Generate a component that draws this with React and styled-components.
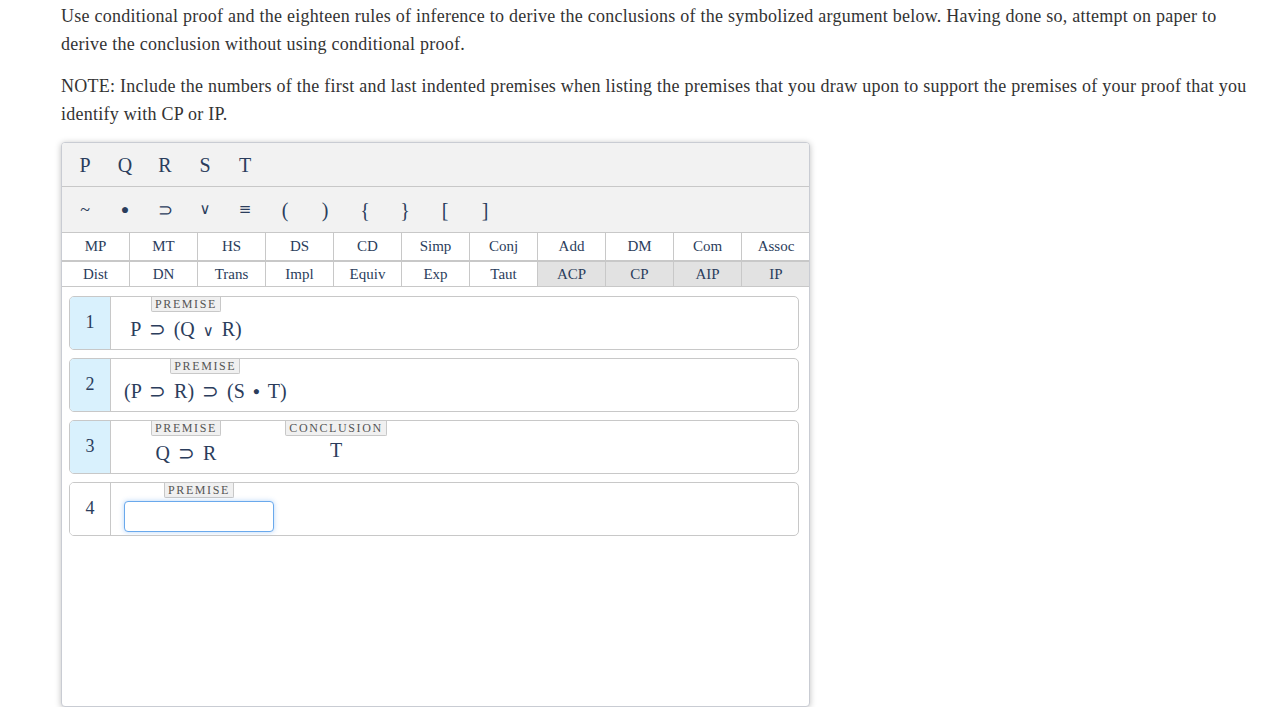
import React from "react";
import styled, { createGlobalStyle } from "styled-components";

const letters = ["P", "Q", "R", "S", "T"];
const symbols = [
  { s: "~", size: 18 },
  { s: "●", size: 14 },
  { s: "⊃", size: 18 },
  { s: "∨", size: 15, sans: true },
  { s: "≡", size: 15, sans: true },
  { s: "(", size: 20 },
  { s: ")", size: 20 },
  { s: "{", size: 20 },
  { s: "}", size: 20 },
  { s: "[", size: 20 },
  { s: "]", size: 20 },
];
const rules = [
  ["MP", "MT", "HS", "DS", "CD", "Simp", "Conj", "Add", "DM", "Com", "Assoc"],
  ["Dist", "DN", "Trans", "Impl", "Equiv", "Exp", "Taut", "ACP", "CP", "AIP", "IP"],
];
const shaded = ["ACP", "CP", "AIP", "IP"];

const lines = [
  { n: 1, formula: "P ⊃ (Q ∨ R)", given: true },
  { n: 2, formula: "(P ⊃ R) ⊃ (S • T)", given: true },
  { n: 3, formula: "Q ⊃ R", given: true, conclusion: "T" },
  { n: 4, input: true },
];

// split a formula so the wedge and dot get their own glyph size
const renderFormula = (text) =>
  text.split(/(∨|•)/).map((part, i) =>
    part === "∨" ? (
      <Wedge key={i}>∨</Wedge>
    ) : part === "•" ? (
      <Dot key={i}>●</Dot>
    ) : (
      part
    )
  );

const App = () => {
  return (
    <Page>
      <Global />
      <Para>
        Use conditional proof and the eighteen rules of inference to derive the conclusions of the
        symbolized argument below. Having done so, attempt on paper to derive the conclusion without
        using conditional proof.
      </Para>
      <Para>
        NOTE: Include the numbers of the first and last indented premises when listing the premises
        that you draw upon to support the premises of your proof that you identify with CP or IP.
      </Para>
      <Panel>
        <KeyRow>
          {letters.map((l) => (
            <Key key={l} size={20}>
              {l}
            </Key>
          ))}
        </KeyRow>
        <KeyRow symbols>
          {symbols.map((k) => (
            <Key key={k.s} size={k.size} sans={k.sans}>
              {k.s}
            </Key>
          ))}
        </KeyRow>
        <RuleGrid>
          {rules.map((row, i) =>
            row.map((r) => (
              <Rule key={r} shade={shaded.includes(r)} second={i === 1}>
                {r}
              </Rule>
            ))
          )}
        </RuleGrid>
        <Lines>
          {lines.map((line) => (
            <Line key={line.n}>
              <Num given={line.given}>{line.n}</Num>
              <Body>
                <Col>
                  <Tag>PREMISE</Tag>
                  {line.input ? <Field /> : <Formula>{renderFormula(line.formula)}</Formula>}
                </Col>
                {line.conclusion && (
                  <Col>
                    <Tag>CONCLUSION</Tag>
                    <Formula short>{line.conclusion}</Formula>
                  </Col>
                )}
              </Body>
            </Line>
          ))}
        </Lines>
      </Panel>
    </Page>
  );
};

export default App;

const Global = createGlobalStyle`
  body {
    margin: 0;
    background: #fff;
  }
  * { box-sizing: border-box; }
`;

const Page = styled.div`
  padding: 2px 0 0 61px;
  font-family: "Liberation Serif", "Times New Roman", serif;
  color: #333;
`;

const Para = styled.p`
  margin: 0 0 14px;
  font-size: 18px;
  line-height: 28px;
  letter-spacing: 0.25px;
`;

const Panel = styled.div`
  width: 749px;
  height: 565px;
  margin-top: 14px;
  border: 1px solid #c9ccd3;
  border-radius: 4px;
  box-shadow: 0 1px 6px rgba(0, 0, 0, 0.25);
  background: #fff;
  overflow: hidden;
  color: #2b3d5c;
`;

const KeyRow = styled.div`
  display: flex;
  align-items: center;
  height: ${(p) => (p.symbols ? "46px" : "44px")};
  padding-left: 3px;
  background: #f2f2f2;
  border-bottom: 1px solid #c8c8c8;
`;

const Key = styled.span`
  width: 40px;
  text-align: center;
  font-size: ${(p) => p.size}px;
  font-family: ${(p) => (p.sans ? '"DejaVu Sans", sans-serif' : '"Liberation Serif", serif')};
  line-height: 1;
`;

const RuleGrid = styled.div`
  display: grid;
  grid-template-columns: repeat(11, 68px);
  border-bottom: 1px solid #c8c8c8;
`;

const Rule = styled.div`
  height: ${(p) => (p.second ? "26px" : "27px")};
  display: flex;
  align-items: center;
  justify-content: center;
  font-size: 15px;
  background: ${(p) => (p.shade ? "#e2e2e2" : "#fff")};
  border-right: 1px solid #c8c8c8;
  border-top: ${(p) => (p.second ? "2px solid #c8c8c8" : "none")};
  &:nth-child(11n) {
    border-right: none;
  }
`;

const Lines = styled.div`
  display: flex;
  flex-direction: column;
  gap: 8px;
  padding: 9px 10px 0 7px;
`;

const Line = styled.div`
  display: flex;
  height: 54px;
  border: 1px solid #c8c8c8;
  border-radius: 5px;
  overflow: hidden;
`;

const Num = styled.div`
  width: 41px;
  display: flex;
  align-items: center;
  justify-content: center;
  padding-bottom: 2px;
  font-size: 18px;
  background: ${(p) => (p.given ? "#d9f1fd" : "#fff")};
  border-right: 1px solid #c8c8c8;
`;

const Body = styled.div`
  display: flex;
  gap: 26px;
  padding-left: 13px;
`;

const Col = styled.div`
  display: flex;
  flex-direction: column;
  align-items: center;
  min-width: 124px;
`;

const Tag = styled.span`
  padding: 1px 3px 0;
  font-size: 12px;
  line-height: 13px;
  letter-spacing: 1.6px;
  color: #555;
  background: #f0f0f0;
  border: 1px solid #c8c8c8;
  border-top: none;
  border-radius: 0 0 2px 2px;
`;

const Formula = styled.div`
  margin-top: ${(p) => (p.short ? "2px" : "5px")};
  font-size: 20px;
  line-height: 24px;
  white-space: nowrap;
  word-spacing: 3px;
`;

const Wedge = styled.span`
  font-family: "DejaVu Sans", sans-serif;
  font-size: 15px;
`;

const Dot = styled.span`
  font-size: 12px;
  vertical-align: 3px;
`;

const Field = styled.div`
  width: 150px;
  height: 31px;
  margin-top: 3px;
  border: 1px solid #6aa9ec;
  border-radius: 4px;
  box-shadow: 0 0 5px rgba(90, 160, 240, 0.45);
  background: #fff;
`;
